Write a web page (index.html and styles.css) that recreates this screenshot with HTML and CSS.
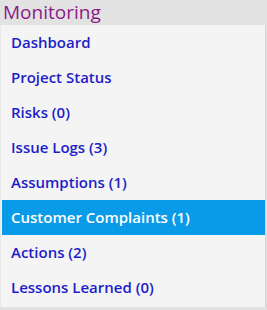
FILE: index.html
```html
<!DOCTYPE html>
<html>
<head>
<meta charset="utf-8">
<link rel="stylesheet" href="styles.css">
</head>
<body>
<div class="panel">
  <div class="header">Monitoring</div>
  <ul class="menu">
    <li class="item">Dashboard</li>
    <li class="item">Project Status</li>
    <li class="item">Risks (0)</li>
    <li class="item">Issue Logs (3)</li>
    <li class="item">Assumptions (1)</li>
    <li class="item active">Customer Complaints (1)</li>
    <li class="item">Actions (2)</li>
    <li class="item">Lessons Learned (0)</li>
  </ul>
</div>
</body>
</html>
```
FILE: styles.css
```css
html, body {
  margin: 0;
  padding: 0;
  background: #e2e2e2;
}
.panel {
  width: 267px;
  height: 310px;
  font-family: "Open Sans", "Noto Sans", sans-serif;
}
.header {
  height: 25px;
  box-sizing: border-box;
  padding-left: 3px;
  font-size: 19px;
  line-height: 24px;
  color: #8c1a88;
  background: #e2e2e2;
  overflow: hidden;
}
.menu {
  list-style: none;
  margin: 0;
  padding: 0 0 2px 1px;
  width: 263px;
  background: #f4f4f4;
  border-left: 1px solid #e9e9e9;
  border-right: 1px solid #d6d6d6;
}
.item {
  height: 35px;
  line-height: 35px;
  padding-left: 9px;
  font-size: 15px;
  font-weight: 600;
  color: #1e1ec8;
}
.item.active {
  background: #0a9be8;
  color: #ffffff;
}
```
